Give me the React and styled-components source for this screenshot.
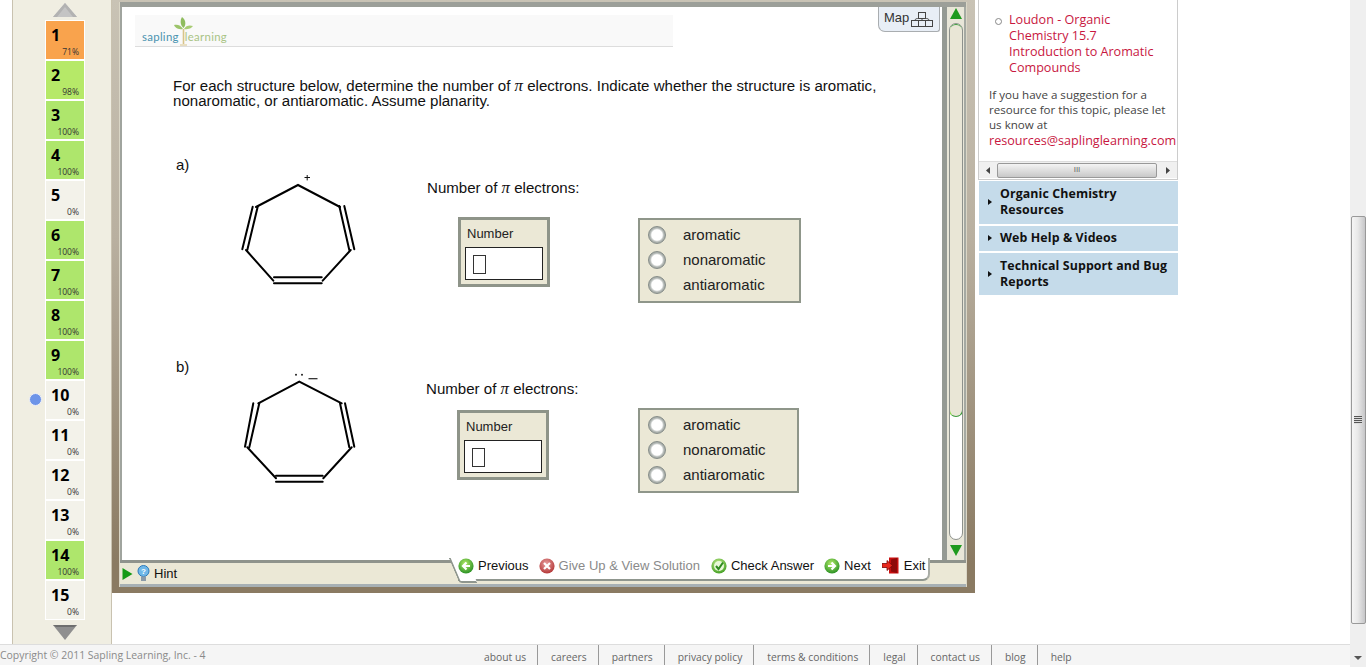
import React from "react";
import styled, { createGlobalStyle } from "styled-components";

const Global = createGlobalStyle`
  html, body { margin: 0; padding: 0; background: #fff; overflow: hidden; }
  * { box-sizing: border-box; }
`;

const Page = styled.div`
  width: 1366px; height: 667px; display: flex; overflow: hidden; background: #fff;
`;
const PageCol = styled.div`
  width: 1350px; display: flex; flex-direction: column;
`;
const Main = styled.div`
  display: flex; height: 644px; padding-left: 12px;
`;

/* quiz sidebar */
const Sidebar = styled.nav`
  width: 100px; height: 644px; background: #f0eee2;
  border-left: 1px solid #c9c2b0; border-right: 1px solid #c9c2b0;
  padding-left: 32px; display: flex; flex-direction: column;
`;
const ArrowBox = styled.div`
  height: ${p => p.$h}px; width: 40px; display: flex; justify-content: center;
  align-items: ${p => p.$end ? "flex-end" : "flex-start"};
  padding: ${p => p.$end ? "0 0 4px" : "3px 0 0"};
`;
const Item = styled.div`
  position: relative; width: 40px; height: 40px; border: 1px solid #fff;
  background: ${p => p.$bg};
  font-family: "Open Sans", sans-serif; color: #000;
`;
const ItemNum = styled.div`
  font-size: 16px; font-weight: 700; line-height: 20px; padding: 4px 0 0 5px; height: 24px;
`;
const ItemPct = styled.div`
  font-size: 8.5px; line-height: 11px; text-align: right; padding-right: 5px; color: #333; margin-top: 1px;
`;
const Dot = styled.span`
  position: absolute; left: -17px; top: 12px; width: 13px; height: 13px; border-radius: 50%;
  background: #6d94e8; border: 1px solid #eef0f8;
`;

/* applet frame */
const Frame = styled.div`
  width: 863px; height: 593px; padding: 2px 8px 6px 7px;
  background: linear-gradient(#c9c3b5, #b9b0a0 40%, #8a7a62 95%);
`;
const Inner = styled.div`
  height: 100%; display: flex; flex-direction: column; background: #ebe8d6;
  border: 1px solid #dad6c6; border-top: none; border-bottom: none;
`;
const Upper = styled.div`
  height: 561px; display: flex; background: #fff; border-top: 5px solid #9c9f99;
  border-bottom: 3px solid #8f938c;
`;
const Content = styled.div`
  position: relative; width: 827px; background: #fff; padding-left: 2px;
  border-left: 2px solid #a0a49e; border-right: 5px solid #959a94;
`;
const LogoBar = styled.div`
  margin: 8px 0 0 11px; width: 538px; height: 32px; background: #f9f9f9;
  border-bottom: 1px solid #ddd; padding-left: 7px;
  display: flex; align-items: flex-end;
`;
const LogoWord = styled.span`
  font-family: "Lato", sans-serif; font-size: 11.4px; line-height: 18px; letter-spacing: .3px;
  color: ${p => p.$c};
`;
const LogoSprout = styled.svg`
  margin: 0 -8px 0 -5px; flex: none;
`;
const MapBtn = styled.div`
  position: absolute; top: 0; right: 2px; width: 62px; height: 25px;
  background: #e8eef6; border: 1px solid #a9adb0; border-top: none;
  border-bottom-left-radius: 7px; border-bottom-right-radius: 3px;
  display: flex; align-items: center; padding: 0 0 3px 5px; gap: 2px;
  font: 13px "Liberation Sans", sans-serif; color: #333;
`;
const Question = styled.p`
  margin: 31px 0 0 49px; width: 740px;
  font: 15.07px/15px "Liberation Sans", sans-serif; color: #111;
`;
const Row = styled.section`
  display: flex; padding-left: 52px; height: ${p => p.$h}px; margin-top: ${p => p.$mt}px;
  font-family: "Liberation Sans", sans-serif; color: #111;
`;
const Letter = styled.div`
  width: 50px; font-size: 15px; line-height: 16px;
`;
const Molecule = styled.svg`
  display: block; width: 150px; height: 130px; margin-top: ${p => p.$mt}px; flex: none;
`;
const Answer = styled.div`
  margin-left: ${p => p.$ml}px; padding-top: ${p => p.$pt}px;
`;
const AnswerLabel = styled.div`
  font-size: 15.07px; line-height: 16px; color: #111;
`;
const Fields = styled.div`
  display: flex; align-items: flex-start; margin-top: ${p => p.$mt}px; padding-left: 31px;
`;
const NumberBox = styled.div`
  width: 92px; height: 70px; background: #ebe8d6; border: 3px solid #8e9489;
  padding: 6px 4px 0; font-size: 13px; line-height: 16px;
  margin-top: ${p => p.$mt}px;
`;
const NumberLabel = styled.div`
  padding-left: 2px; color: #222;
`;
const NumberInput = styled.div`
  width: 78px; height: 33px; margin: 5px 0 0 0; background: #fff; border: 1px solid #222;
  padding: 7px;
`;
const Caret = styled.span`
  display: block; width: 13px; height: 19px; border: 1px solid #333;
`;
const RadioBox = styled.div`
  width: ${p => p.$w}px; height: ${p => p.$h}px; margin-left: ${p => p.$ml}px; margin-top: ${p => p.$mt}px;
  background: #ebe8d6; border: 2px solid #8f968a; padding: 6px 0 0 8px;
  display: flex; flex-direction: column; gap: 7px;
`;
const RadioRow = styled.div`
  display: flex; align-items: center; height: 18px; gap: 17px; font-size: 15px; color: #222;
`;
const RadioText = styled.span`
  margin-top: -2px;
`;
const Radio = styled.span`
  width: 18px; height: 18px; border-radius: 50%; flex: none;
  border: 1px solid #868d89;
  background: radial-gradient(circle, #fff 0 46%, #b5bab7 60%, #7f8682 100%);
`;

/* applet scrollbar */
const ScrollCol = styled.div`
  width: 19px; background: #e8e6d8; padding: 1px 0 0 0;
  border-right: 2px solid #a5a9a2;
  display: flex; flex-direction: column; align-items: center;
`;
const Track = styled.div`
  width: 14px; height: 517px; margin: 4px 0 5px; background: #fff;
  border: 1px solid #8d918c; border-radius: 7px;
  display: flex; flex-direction: column; overflow: hidden; flex: none;
`;
const Thumb = styled.div`
  height: 394px; background: #e9e6d6; border: 1px solid #3a9a3a; border-top-width: 2px;
  border-left-color: #8fdc50; margin: -1px; border-radius: 7px; flex: none;
`;

/* bottom bar */
const Bottom = styled.div`
  flex: 1; display: flex; align-items: flex-start; position: relative;
  border-bottom: 3px solid #a7b0b4; padding-left: 2px;
`;
const Hint = styled.div`
  display: flex; align-items: center; gap: 4px; width: 328px; height: 21px;
  font: 13px "Liberation Sans", sans-serif; color: #111;
`;
const Tab = styled.div`
  position: relative; margin: -5px 0 0 8px; width: 472px; height: 23px;
  background: #fff; border-bottom: 2px solid #8f968e; border-right: 2px solid #a9ada6;
  border-bottom-right-radius: 7px;
  display: flex; align-items: center; padding-bottom: 6px;
  font: 13px "Liberation Sans", sans-serif; color: #111;
  &::before {
    content: ""; position: absolute; left: -4px; top: 0; width: 16px; height: 23px;
    background: #fff; border-left: 2px solid #8f968e; border-bottom: 2px solid #8f968e;
    transform: skewX(23deg); border-bottom-left-radius: 3px;
  }
`;
const NavBtn = styled.span`
  position: relative; display: flex; align-items: center; gap: ${p => p.$gap ?? 4}px;
  margin-left: ${p => p.$ml}px; color: ${p => p.$dim ? "#8a8a8a" : "#111"}; white-space: nowrap;
`;

/* right column */
const Aside = styled.aside`
  width: 200px; margin-left: 3px; display: flex; flex-direction: column;
  font-family: "Open Sans", sans-serif;
`;
const Resources = styled.div`
  height: 180px; border: 1px solid #ccc; border-top: none; display: flex; flex-direction: column;
  overflow: hidden;
`;
const ResBody = styled.div`
  height: 161px; padding: 12px 0 0 10px; white-space: nowrap;
`;
const ResList = styled.ul`
  margin: 0; padding: 0 0 0 20px; list-style: none; position: relative;
`;
const ResItem = styled.li`
  position: relative; font-size: 12.6px; line-height: 16px; color: #c8173f;
  &::before {
    content: ""; position: absolute; left: -14px; top: 6px; width: 5px; height: 5px;
    border-radius: 50%; border: 1px solid #888;
  }
`;
const ResNote = styled.p`
  margin: 11px 0 0 0; font-size: 11.6px; line-height: 15px; color: #444;
`;
const ResMail = styled.div`
  margin-top: 1px; font-size: 12.6px; line-height: 16px; color: #c8173f;
`;
const HScroll = styled.div`
  height: 17px; display: flex; align-items: center; background: #f0f0f0; border-top: 1px solid #ddd;
`;
const HBtn = styled.span`
  width: 18px; display: flex; justify-content: center; flex: none;
  margin-left: ${p => p.$ml ?? 0}px;
`;
const HThumb = styled.div`
  width: 160px; height: 15px; border: 1px solid #999; border-radius: 2px;
  background: linear-gradient(#f4f4f4, #c8c8c8);
  display: flex; align-items: center; justify-content: center;
  font-size: 8px; line-height: 1; color: #666; font-family: "Liberation Sans", sans-serif;
`;
const Accordion = styled.div`
  display: flex; flex-direction: column; gap: 2px; margin-top: 1px; padding-left: 1px;
`;
const AccItem = styled.div`
  display: flex; align-items: center; height: ${p => p.$h}px; background: #c5dbea;
  padding: 0 0 ${p => p.$pb ?? 0}px 9px; gap: 8px; font-size: 12.4px; font-weight: 700; line-height: 16px; color: #111;
  letter-spacing: .1px;
`;
const AccTri = styled.span`
  width: 0; height: 0; flex: none; border-left: 4px solid #111;
  border-top: 3.5px solid transparent; border-bottom: 3.5px solid transparent;
`;

/* footer */
const Footer = styled.footer`
  height: 21px; background: #f5f5f5; border-top: 1px solid #ddd; display: flex;
  font-family: "Open Sans", sans-serif; font-size: 10.3px; color: #666;
`;
const Copy = styled.div`
  width: 471px; font-size: 10.45px; line-height: 20px; color: #8a8a8a; white-space: nowrap;
`;
const FootLink = styled.a`
  padding: 3px 11px 0 13px; line-height: 18px; border-right: ${p => p.$last ? "none" : "1px solid #999"};
  color: #666;
`;

/* page scrollbar */
const PageBar = styled.div`
  width: 16px; height: 667px; background: #efefef; display: flex; flex-direction: column;
  align-items: center; padding-top: 216px;
`;
const PageThumb = styled.div`
  width: 15px; height: 408px; border: 1px solid #999; border-radius: 2px;
  background: linear-gradient(90deg, #f5f5f5, #e8e8e8 45%, #c6c6c8);
  display: flex; align-items: center; justify-content: center;
`;
const Grip = styled.span`
  width: 8px; height: 8px;
  background: repeating-linear-gradient(#555 0 1px, #ddd 1px 2px);
`;
const PageArrow = styled.span`
  margin-top: 32px; width: 0; height: 0; border-top: 4px solid #555;
  border-left: 4px solid transparent; border-right: 4px solid transparent;
`;

const items = [
  [1, "71%", "#f9a34d"], [2, "98%", "#b6e968"], [3, "100%", "#aee66c"], [4, "100%", "#aee66c"],
  [5, "0%", "#f3f2ea"], [6, "100%", "#aee66c"], [7, "100%", "#aee66c"], [8, "100%", "#aee66c"],
  [9, "100%", "#aee66c"], [10, "0%", "#f3f2ea"], [11, "0%", "#f3f2ea"], [12, "0%", "#f3f2ea"],
  [13, "0%", "#f3f2ea"], [14, "100%", "#aee66c"], [15, "0%", "#f3f2ea"],
];

const Line = ({ p }) => <line x1={p[0]} y1={p[1]} x2={p[2]} y2={p[3]} />;

const MolA = () => (
  <Molecule $mt={8} viewBox="226 165 150 130">
    <g stroke="#000" strokeWidth="2" fill="none" strokeLinecap="round">
      <polyline points="256,207 298,185 340,207" />
      <Line p={[252.7, 206.7, 242.3, 249.3]} />
      <Line p={[257.7, 206.7, 247.3, 250]} />
      <Line p={[344.3, 206, 354.3, 249.3]} />
      <Line p={[339.3, 206, 349.3, 250]} />
      <Line p={[246, 250, 273.3, 280.7]} />
      <Line p={[350.7, 250, 322.7, 280.7]} />
      <Line p={[274, 277.3, 321.7, 277.3]} />
      <Line p={[274, 283.3, 321.7, 283.3]} />
    </g>
    <path d="M304.5 177.5h5.5M307.2 175v5.4" stroke="#111" strokeWidth="1" fill="none" />
  </Molecule>
);

const MolB = () => (
  <Molecule $mt={6} viewBox="226 365 150 130">
    <g stroke="#000" strokeWidth="2" fill="none" strokeLinecap="round">
      <polyline points="258.3,403.3 299.3,381.7 341.7,403.3" />
      <Line p={[253.3, 403.3, 245, 446.7]} />
      <Line p={[259.3, 403.3, 249.3, 447.3]} />
      <Line p={[340, 403.3, 349.3, 447.3]} />
      <Line p={[345, 403.3, 354.3, 446.7]} />
      <Line p={[247.3, 447.3, 276, 478.3]} />
      <Line p={[351.7, 447.3, 323.3, 478.3]} />
      <Line p={[276, 475.7, 322.7, 475.7]} />
      <Line p={[276, 481.7, 322.7, 481.7]} />
    </g>
    <circle cx="296" cy="374.7" r="1" fill="#222" />
    <circle cx="302" cy="374.7" r="1" fill="#222" />
    <path d="M308.5 378.7h9" stroke="#222" strokeWidth="1.2" />
  </Molecule>
);

const PiGlyph = styled.i`
  font-family: "Liberation Serif", serif; font-size: 1.12em; line-height: 0;
`;
const Pi = () => <PiGlyph>π</PiGlyph>;

const Radios = ({ w, h, ml, mt }) => (
  <RadioBox $w={w} $h={h} $ml={ml} $mt={mt}>
    {["aromatic", "nonaromatic", "antiaromatic"].map(t => (
      <RadioRow key={t}><Radio /><RadioText>{t}</RadioText></RadioRow>
    ))}
  </RadioBox>
);

const NumField = ({ mt }) => (
  <NumberBox $mt={mt}>
    <NumberLabel>Number</NumberLabel>
    <NumberInput><Caret /></NumberInput>
  </NumberBox>
);

const CircleIcon = ({ id, c1, c2, children }) => (
  <svg width="16" height="16" viewBox="0 0 16 16">
    <defs>
      <radialGradient id={id} cx="45%" cy="35%" r="70%">
        <stop offset="0" stopColor={c1} />
        <stop offset="1" stopColor={c2} />
      </radialGradient>
    </defs>
    <circle cx="8" cy="8" r="7.6" fill={`url(#${id})`} />
    {children}
  </svg>
);

const Tri = ({ dir, c, w = 12, h = 11 }) => (
  <svg width={w} height={h} viewBox="0 0 12 11">
    <path d={dir === "up" ? "M6 0L12 11H0Z" : "M0 0H12L6 11Z"} fill={c} />
  </svg>
);

export default function App() {
  return (
    <Page>
      <Global />
      <PageCol>
        <Main>
          <Sidebar>
            <ArrowBox $h={20}>
              <svg width="24" height="14" viewBox="0 0 24 14">
                <path d="M12 0L24 14H0Z" fill="#c4c4c4" />
                <path d="M12 0L24 14H20L12 4L4 14H0Z" fill="#b2b2b2" />
              </svg>
            </ArrowBox>
            {items.map(([n, pct, bg]) => (
              <Item key={n} $bg={bg}>
                {n === 10 && <Dot />}
                <ItemNum>{n}</ItemNum>
                <ItemPct>{pct}</ItemPct>
              </Item>
            ))}
            <ArrowBox $h={24} $end>
              <svg width="24" height="15" viewBox="0 0 24 15">
                <path d="M0 0H24L12 15Z" fill="#8f8f8f" />
                <path d="M0 0H24L21 2H3Z" fill="#6e6e6e" />
              </svg>
            </ArrowBox>
          </Sidebar>

          <Frame>
            <Inner>
              <Upper>
                <Content>
                  <LogoBar>
                    <LogoWord $c="#4a93b0">sapling</LogoWord>
                    <LogoSprout width="19" height="29" viewBox="0 0 19 29">
                      <path d="M9.5 12V27" stroke="#d8c48a" strokeWidth="1.6" />
                      <path d="M6 28H13" stroke="#d8c48a" strokeWidth="1" />
                      <path d="M9 12C3 13 1 10 0 8c3-1 7 0 9 4Z" fill="#9cc46a" />
                      <path d="M10 12c6 1 8-2 9-3-3-1-7-1-9 3Z" fill="#a9cc74" />
                      <path d="M9.5 11C6 8 6 3 8 0c3 2 5 7 1.500 11Z" fill="#8fbc5e" />
                    </LogoSprout>
                    <LogoWord $c="#a9c486">learning</LogoWord>
                  </LogoBar>
                  <MapBtn>
                    Map
                    <svg width="23" height="18" viewBox="0 0 23 18" fill="none" stroke="#444" strokeWidth="1">
                      <rect x="7.500" y="3.500" width="7" height="6" />
                      <rect x="0.500" y="11.500" width="7" height="6" />
                      <rect x="7.500" y="11.500" width="7" height="6" />
                      <rect x="14.500" y="11.500" width="7" height="6" />
                      <path d="M11 9.500V11.500M4 11.500C4 9.500 6 9.500 8 9.500M18 11.500C18 9.500 16 9.500 14 9.500" />
                    </svg>
                  </MapBtn>
                  <Question>
                    For each structure below, determine the number of <Pi /> electrons. Indicate whether the structure is aromatic,<br />
                    nonaromatic, or antiaromatic. Assume planarity.
                  </Question>
                  <Row $h={202} $mt={49}>
                    <Letter>a)</Letter>
                    <MolA />
                    <Answer $ml={51} $pt={23}>
                      <AnswerLabel>Number of <Pi /> electrons:</AnswerLabel>
                      <Fields $mt={21}>
                        <NumField mt={0} />
                        <Radios w={163} h={85} ml={88} mt={1} />
                      </Fields>
                    </Answer>
                  </Row>
                  <Row $h={150} $mt={0}>
                    <Letter>b)</Letter>
                    <MolB />
                    <Answer $ml={50} $pt={22}>
                      <AnswerLabel>Number of <Pi /> electrons:</AnswerLabel>
                      <Fields $mt={11}>
                        <NumField mt={2} />
                        <Radios w={161} h={85} ml={89} mt={0} />
                      </Fields>
                    </Answer>
                  </Row>
                </Content>
                <ScrollCol>
                  <Tri dir="up" c="#1e9a1e" />
                  <Track><Thumb /></Track>
                  <Tri dir="down" c="#1e9a1e" />
                </ScrollCol>
              </Upper>
              <Bottom>
                <Hint>
                  <svg width="11" height="12" viewBox="0 0 10 12"><path d="M0 0L10 6L0 12Z" fill="#159a15" /></svg>
                  <svg width="13" height="17" viewBox="0 0 13 17">
                    <circle cx="6.500" cy="6" r="5.500" fill="#6fb8e8" stroke="#2c78b8" />
                    <rect x="4" y="11.500" width="5" height="4.500" fill="#8a9aa8" />
                    <text x="6.500" y="9" fontSize="8" fontWeight="700" textAnchor="middle" fill="#fff" fontFamily="Liberation Sans">?</text>
                  </svg>
                  Hint
                </Hint>
                <Tab>
                  <NavBtn $ml={0}>
                    <CircleIcon id="g1" c1="#b6ec6a" c2="#1f8a1f">
                      <path d="M12 8H6M8.500 4.500L5 8l3.500 3.500" stroke="#fff" strokeWidth="2.200" fill="none" />
                    </CircleIcon>
                    Previous
                  </NavBtn>
                  <NavBtn $ml={10} $dim>
                    <CircleIcon id="g2" c1="#e8a0a0" c2="#b03030">
                      <path d="M5 5l6 6M11 5l-6 6" stroke="#fff" strokeWidth="2.200" />
                    </CircleIcon>
                    Give Up &amp; View Solution
                  </NavBtn>
                  <NavBtn $ml={11}>
                    <CircleIcon id="g3" c1="#c8f090" c2="#3a9a1c">
                      <circle cx="8" cy="8" r="5" fill="#e8f8d8" />
                      <path d="M5 8l2.500 3L12 4.500" stroke="#2f8a20" strokeWidth="2" fill="none" />
                    </CircleIcon>
                    Check Answer
                  </NavBtn>
                  <NavBtn $ml={10}>
                    <CircleIcon id="g4" c1="#b6ec6a" c2="#1f8a1f">
                      <path d="M4 8h6M7.500 4.500L11 8l-3.500 3.500" stroke="#fff" strokeWidth="2.200" fill="none" />
                    </CircleIcon>
                    Next
                  </NavBtn>
                  <NavBtn $ml={11} $gap={5}>
                    <svg width="17" height="17" viewBox="0 0 17 17">
                      <rect x="7" y="0.500" width="9.500" height="16" fill="#c80f0f" />
                      <path d="M9 2.500L15 1V16L9 14.500Z" fill="#8e0a0a" />
                      <path d="M0 6.500H5V3.500L10.500 8.500L5 13.500V10.500H0Z" fill="#e8281e" stroke="#7a0808" strokeWidth=".8" />
                    </svg>
                    Exit
                  </NavBtn>
                </Tab>
              </Bottom>
            </Inner>
          </Frame>

          <Aside>
            <Resources>
              <ResBody>
                <ResList>
                  <ResItem>Loudon - Organic<br />Chemistry 15.7<br />Introduction to Aromatic<br />Compounds</ResItem>
                </ResList>
                <ResNote>If you have a suggestion for a<br />resource for this topic, please let<br />us know at</ResNote>
                <ResMail>resources@saplinglearning.com</ResMail>
              </ResBody>
              <HScroll>
                <HBtn><svg width="4" height="7"><path d="M4 0V7L0 3.500Z" fill="#444" /></svg></HBtn>
                <HThumb>III</HThumb>
                <HBtn $ml={2}><svg width="4" height="7"><path d="M0 0V7L4 3.500Z" fill="#444" /></svg></HBtn>
              </HScroll>
            </Resources>
            <Accordion>
              <AccItem $h={43} $pb={1}><AccTri /><span>Organic Chemistry<br />Resources</span></AccItem>
              <AccItem $h={25} $pb={2}><AccTri /><span>Web Help &amp; Videos</span></AccItem>
              <AccItem $h={42}><AccTri /><span>Technical Support and Bug<br />Reports</span></AccItem>
            </Accordion>
          </Aside>
        </Main>
        <Footer>
          <Copy>Copyright © 2011 Sapling Learning, Inc. - 4</Copy>
          {["about us", "careers", "partners", "privacy policy", "terms & conditions", "legal", "contact us", "blog"].map(t => (
            <FootLink key={t}>{t}</FootLink>
          ))}
          <FootLink $last>help</FootLink>
        </Footer>
      </PageCol>
      <PageBar>
        <PageThumb><Grip /></PageThumb>
        <PageArrow />
      </PageBar>
    </Page>
  );
}
